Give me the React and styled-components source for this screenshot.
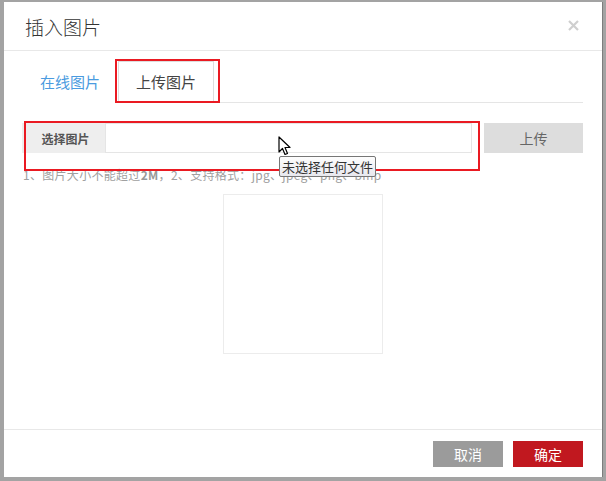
import React from 'react'
import styled, { createGlobalStyle } from 'styled-components'

const GlobalStyle = createGlobalStyle`
    html, body {
        margin: 0;
        padding: 0;
        background: #a3a3a3;
        font-family: "Noto Sans CJK SC", "Noto Sans", "Liberation Sans", sans-serif;
    }
`

export default function App() {
    return (
        <Page>
            <GlobalStyle />
            <Dialog>
                <Header>
                    <Title>插入图片</Title>
                    <Close aria-label="close">
                        <svg width="11" height="11" viewBox="0 0 11 11">
                            <path d="M1 1 L10 10 M10 1 L1 10" stroke="#cfcfcf" strokeWidth="2.2" />
                        </svg>
                    </Close>
                </Header>
                <Body>
                    <Tabs>
                        <Tab>在线图片</Tab>
                        <Tab active marked>上传图片</Tab>
                    </Tabs>
                    <UploadRow>
                        <InputGroup>
                            <Addon>选择图片</Addon>
                            <FileField />
                            <Mark />
                            <Cursor width="13" height="20" viewBox="0 0 13 20">
                                <path d="M1 1 L1 16 L4.5 12.5 L7 18.5 L9.5 17.5 L7 11.5 L12 11.5 Z" fill="#fff" stroke="#000" strokeWidth="1.2" strokeLinejoin="round" />
                            </Cursor>
                            <Tooltip>未选择任何文件</Tooltip>
                        </InputGroup>
                        <UploadButton>上传</UploadButton>
                    </UploadRow>
                    <Hint>1、图片大小不能超过<b>2M</b>，2、支持格式：jpg、jpeg、png、bmp</Hint>
                    <Preview />
                </Body>
                <Footer>
                    <Button>取消</Button>
                    <Button primary>确定</Button>
                </Footer>
            </Dialog>
        </Page>
    )
}

const Page = styled.div`
    padding: 2px 4px 0 4px;
    height: 481px;
    box-sizing: border-box;
`

const Dialog = styled.div`
    width: 598px;
    height: 475px;
    background: #fff;
    display: flex;
    flex-direction: column;
    box-shadow: 1px 0 0 #7d7d7d;
`

const Header = styled.div`
    height: 48px;
    display: flex;
    align-items: center;
    justify-content: space-between;
    padding: 0 23px 0 21px;
    border-bottom: 1px solid #e8e8e8;
`

const Title = styled.h1`
    margin: 0;
    font-size: 19px;
    font-weight: 300;
    color: #333;
`

const Close = styled.span`
    display: flex;
    margin-top: -2px;
`

const Body = styled.div`
    flex: 1;
    padding: 10px 19px 0 18px;
    display: flex;
    flex-direction: column;
`

const Tabs = styled.div`
    display: flex;
    border-bottom: 1px solid #e5e5e5;
`

const Tab = styled.div`
    position: relative;
    padding: 10px 17px;
    margin-bottom: -1px;
    font-size: 15px;
    line-height: 20px;
    color: ${p => (p.active ? '#444' : '#4a9be0')};
    border: 1px solid ${p => (p.active ? '#ddd' : 'transparent')};
    border-bottom-color: ${p => (p.active ? '#fff' : 'transparent')};
    background: #fff;

    &::after {
        content: '';
        display: ${p => (p.marked ? 'block' : 'none')};
        position: absolute;
        left: -4px;
        top: -3px;
        right: -7px;
        bottom: -1px;
        border: 2px solid #ea1a22;
    }
`

const UploadRow = styled.div`
    display: flex;
    gap: 12px;
    margin-top: 20px;
    height: 30px;
`

const InputGroup = styled.div`
    position: relative;
    flex: 1;
    display: flex;
`

const Addon = styled.div`
    width: 83px;
    display: flex;
    align-items: center;
    justify-content: center;
    padding-left: 4px;
    box-sizing: border-box;
    background: #eeeeee;
    font-size: 12px;
    font-weight: bold;
    color: #555;
`

const FileField = styled.div`
    flex: 1;
    border: 1px solid #e5e5e5;
`

const Mark = styled.div`
    position: absolute;
    left: 2px;
    top: -2px;
    right: -8px;
    height: 50px;
    border: 2px solid #ea1a22;
    box-sizing: border-box;
    pointer-events: none;
`

const Cursor = styled.svg`
    position: absolute;
    left: 256px;
    top: 13px;
`

const Tooltip = styled.div`
    position: absolute;
    left: 257px;
    top: 33px;
    padding: 0 2px;
    height: 19px;
    line-height: 19px;
    font-size: 13px;
    color: #333;
    background: linear-gradient(#fdfdfd, #e8e8ee);
    border: 1px solid #767676;
    border-radius: 2px;
    white-space: nowrap;
    z-index: 2;
`

const UploadButton = styled.div`
    width: 99px;
    display: flex;
    align-items: center;
    justify-content: center;
    background: #dddddd;
    color: #666;
    font-size: 14px;
`

const Hint = styled.p`
    margin: 14px 0 0 1px;
    font-size: 12px;
    line-height: 16px;
    color: #a0a0a0;
    letter-spacing: 0.3px;

    b {
        color: #999;
    }
`

const Preview = styled.div`
    width: 158px;
    height: 158px;
    margin: 11px auto 0;
    border: 1px solid #ececec;
`

const Footer = styled.div`
    height: 47px;
    border-top: 1px solid #e8e8e8;
    display: flex;
    align-items: center;
    justify-content: flex-end;
    gap: 10px;
    padding-right: 19px;
`

const Button = styled.div`
    width: 70px;
    height: 26px;
    display: flex;
    align-items: center;
    justify-content: center;
    font-size: 14px;
    color: #fff;
    background: ${p => (p.primary ? '#c1181f' : '#9b9b9b')};
`
